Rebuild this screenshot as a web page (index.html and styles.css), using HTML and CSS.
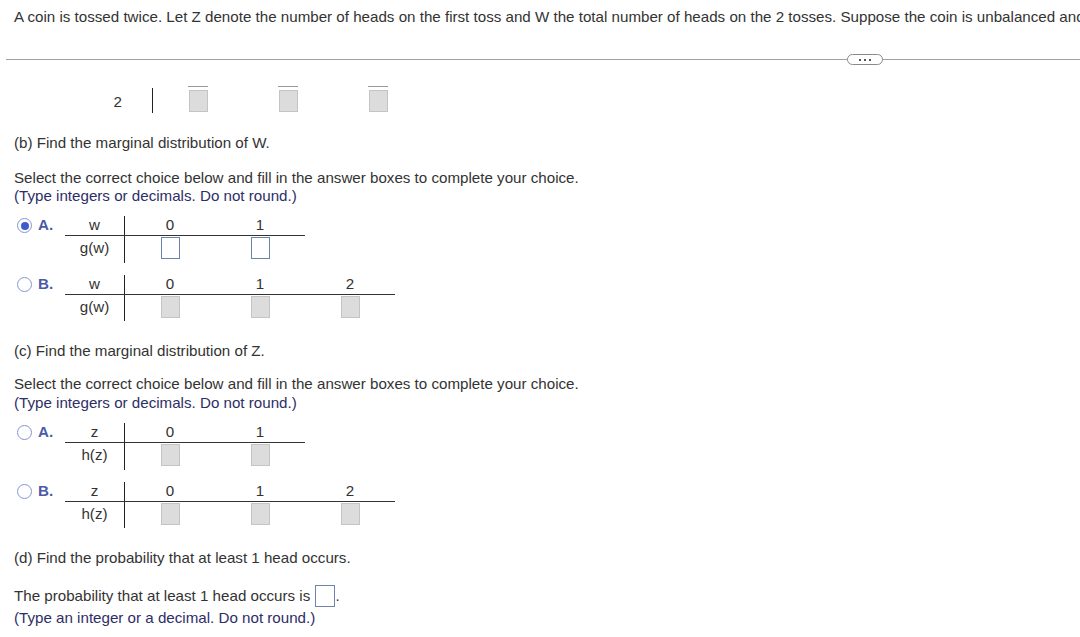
FILE: index.html
```html
<!DOCTYPE html>
<html>
<head>
<meta charset="utf-8">
<link rel="stylesheet" href="styles.css">
</head>
<body>
<div class="page">
  <p class="intro">A coin is tossed twice. Let Z denote the number of heads on the first toss and W the total number of heads on the 2 tosses. Suppose the coin is unbalanced and</p>
  <div class="divider"><span class="more"><i></i><i></i><i></i></span></div>

  <div class="prevrow">
    <div class="prevlabel">2</div>
    <div class="prevcell"><span class="cap"></span><span class="box grey"></span></div>
    <div class="prevcell"><span class="cap"></span><span class="box grey"></span></div>
    <div class="prevcell"><span class="cap"></span><span class="box grey"></span></div>
  </div>

  <p class="q q-b">(b) Find the marginal distribution of W.</p>
  <p class="instr">Select the correct choice below and fill in the answer boxes to complete your choice.</p>
  <p class="hint">(Type integers or decimals. Do not round.)</p>

  <div class="option opt-first">
    <span class="radio checked"></span><span class="letter">A.</span>
    <table class="dist">
      <tr class="head"><td class="lbl">w</td><td>0</td><td>1</td></tr>
      <tr class="data"><td class="lbl">g(w)</td><td><span class="box blue"></span></td><td><span class="box blue"></span></td></tr>
    </table>
  </div>
  <div class="option">
    <span class="radio"></span><span class="letter">B.</span>
    <table class="dist">
      <tr class="head"><td class="lbl">w</td><td>0</td><td>1</td><td>2</td></tr>
      <tr class="data"><td class="lbl">g(w)</td><td><span class="box grey"></span></td><td><span class="box grey"></span></td><td><span class="box grey"></span></td></tr>
    </table>
  </div>

  <p class="q q-c">(c) Find the marginal distribution of Z.</p>
  <p class="instr instr-c">Select the correct choice below and fill in the answer boxes to complete your choice.</p>
  <p class="hint hint-c">(Type integers or decimals. Do not round.)</p>

  <div class="option opt-first">
    <span class="radio"></span><span class="letter">A.</span>
    <table class="dist">
      <tr class="head"><td class="lbl">z</td><td>0</td><td>1</td></tr>
      <tr class="data"><td class="lbl">h(z)</td><td><span class="box grey"></span></td><td><span class="box grey"></span></td></tr>
    </table>
  </div>
  <div class="option">
    <span class="radio"></span><span class="letter">B.</span>
    <table class="dist">
      <tr class="head"><td class="lbl">z</td><td>0</td><td>1</td><td>2</td></tr>
      <tr class="data"><td class="lbl">h(z)</td><td><span class="box grey"></span></td><td><span class="box grey"></span></td><td><span class="box grey"></span></td></tr>
    </table>
  </div>

  <p class="q q-d">(d) Find the probability that at least 1 head occurs.</p>
  <p class="answer">The probability that at least 1 head occurs is <span class="box blue inline"></span>.</p>
  <p class="hint hint-d">(Type an integer or a decimal. Do not round.)</p>
</div>
</body>
</html>
```
FILE: styles.css
```css
html, body {
  margin: 0;
  padding: 0;
  background: #fff;
}
body {
  font-family: "Liberation Sans", Arial, sans-serif;
  font-size: 15.15px;
  color: #333;
  overflow: hidden;
}
.page {
  padding: 8px 0 0 14px;
}
p {
  margin: 0;
  line-height: 18px;
}
.intro {
  white-space: nowrap;
}
.divider {
  margin: 33px 0 0 -8px;
  height: 1px;
  background: #a0a0a0;
  position: relative;
}
.more {
  position: absolute;
  left: 841px;
  top: -5px;
  width: 34px;
  height: 9px;
  border: 1px solid #8a8a8a;
  border-radius: 6px;
  background: #fff;
  display: flex;
  align-items: center;
  justify-content: center;
  gap: 3px;
}
.more i {
  display: block;
  width: 2px;
  height: 2px;
  background: #555;
}
.prevrow {
  display: flex;
  margin-top: 26px;
  height: 27px;
}
.prevlabel {
  width: 139px;
  padding-right: 30px;
  box-sizing: border-box;
  text-align: right;
  line-height: 27px;
  border-right: 1.5px solid #222;
  margin-top: 2px;
  height: 25px;
}
.prevcell {
  width: 90px;
  display: flex;
  flex-direction: column;
  align-items: center;
}
.cap {
  display: block;
  width: 20px;
  height: 0;
  border-top: 1px solid #9a9a9a;
  margin-bottom: 3px;
}
.box {
  display: inline-block;
  width: 17px;
  height: 20px;
  box-sizing: content-box;
  vertical-align: middle;
}
.box.grey {
  background: #dcdcdc;
  border: 1px solid #c4c4c4;
}
.box.blue {
  background: #fff;
  border: 1px solid #6c84ad;
}
.q-b {
  margin-top: 21px;
}
.instr {
  margin-top: 17px;
}
.instr-c {
  margin-top: 15px;
}
.hint {
  color: #2e2e66;
}
.hint-c {
  margin-top: 1px;
}
.option {
  display: flex;
  align-items: flex-start;
  margin-top: 12px;
}
.opt-first {
  margin-top: 11px;
}
.radio {
  display: inline-block;
  width: 13px;
  height: 13px;
  border: 1.5px solid #8594d0;
  border-radius: 50%;
  margin: 2px 0 0 3px;
  position: relative;
  flex: none;
}
.radio.checked::after {
  content: "";
  position: absolute;
  left: 2.5px;
  top: 2.5px;
  width: 8px;
  height: 8px;
  border-radius: 50%;
  background: #3c5bd0;
}
.letter {
  font-weight: bold;
  color: #4c5aa6;
  width: 33px;
  padding-left: 6px;
  box-sizing: border-box;
  line-height: 18px;
  flex: none;
}
.dist {
  border-collapse: collapse;
  border-spacing: 0;
}
.dist td {
  padding: 0;
  width: 90px;
  text-align: center;
}
.dist td.lbl {
  width: 59px;
  border-right: 1.5px solid #222;
}
.dist tr.head td {
  height: 19px;
  line-height: 17px;
  vertical-align: top;
  border-bottom: 1px solid #333;
}
.dist tr.data td {
  height: 27px;
  vertical-align: top;
  padding-top: 1px;
  box-sizing: border-box;
}
.dist tr.data td.lbl {
  line-height: 24px;
  padding-top: 0;
}
.q-c {
  margin-top: 21px;
}
.q-d {
  margin-top: 21px;
}
.answer {
  margin-top: 18px;
  line-height: 22px;
}
.hint-d {
  margin-top: 2px;
}
.box.inline {
  width: 18px;
  height: 20px;
  vertical-align: -6px;
  margin-left: 1px;
}
```
